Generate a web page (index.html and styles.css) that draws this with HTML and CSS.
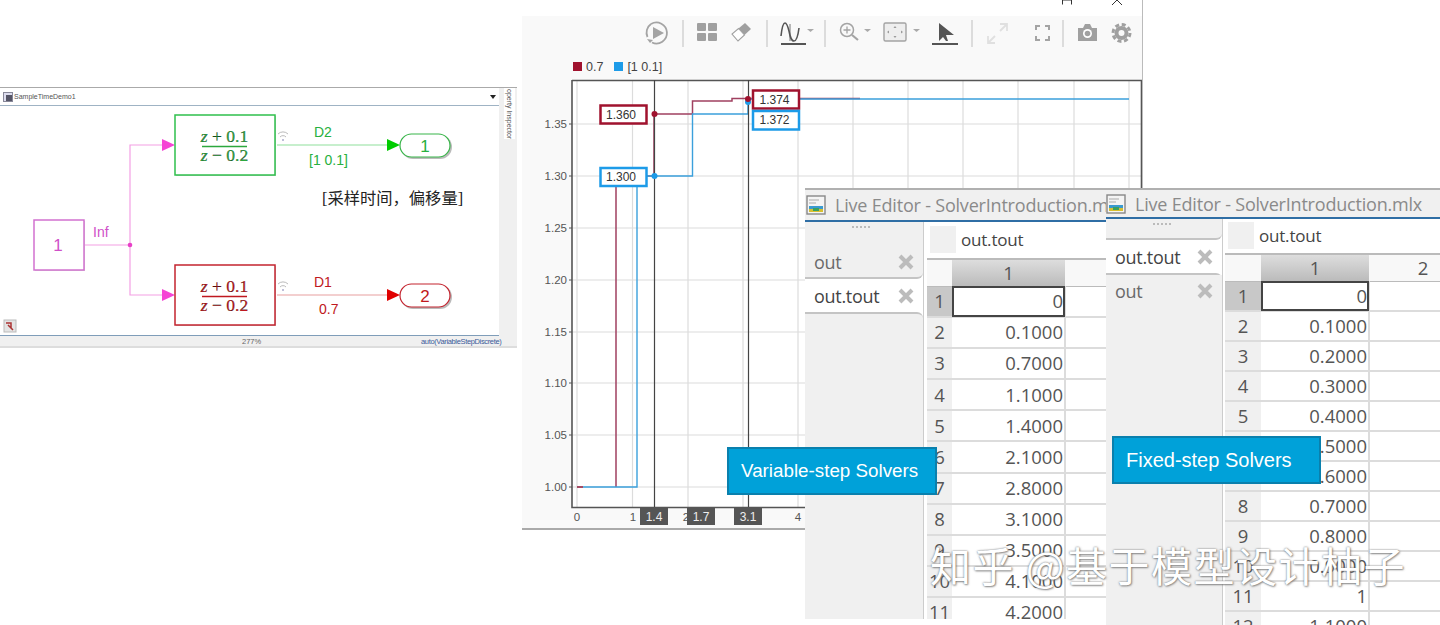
FILE: index.html
```html
<!DOCTYPE html>
<html lang="en">
<head>
  <meta charset="UTF-8" />
  <title>Solver comparison</title>
  <link rel="stylesheet" href="styles.css">
</head>
<body>
  <!-- Simulink model -->
  <div class="window model">
    <div class="model-main">
      <div class="model-title">
        <svg class="model-icon" width="10" height="10" viewBox="0 0 10 10"><rect x="0.5" y="0.5" width="9" height="9" fill="#dde" stroke="#889"/><rect x="3" y="3" width="6" height="6" fill="#556"/></svg>
        <span>SampleTimeDemo1</span>
        <i class="caret"></i>
      </div>
      <svg class="model-canvas" width="499" height="229" viewBox="0 106 499 229">
        <defs>
          <g id="wifi" fill="none" stroke="#bbb" stroke-width="1">
            <path d="M-5 -4a7 7 0 0 1 10 0"/>
            <path d="M-3 -1a4 4 0 0 1 6 0"/>
            <circle cx="0" cy="2" r="1" fill="#aac" stroke="none"/>
          </g>
        </defs>
        <rect x="4" y="320" width="12" height="12" fill="#e4e4e4" stroke="#bbb"/>
        <path d="M6 323h5v5M8 325l5 5" fill="none" stroke="#a33" stroke-width="1.5"/>

        <rect x="35" y="221" width="50" height="50" fill="#bbb" opacity="0.6"/>
        <rect x="34" y="220" width="50" height="50" fill="#fff" stroke="#d272cf" stroke-width="1.5"/>
        <text class="port" x="58" y="251" fill="#d050c8">1</text>
        <text class="sig" x="93" y="237" fill="#d050c8">Inf</text>
        <path d="M85 245H130M163 145H130V295H163" fill="none" stroke="#f3a0e4" stroke-width="1.2"/>
        <circle cx="130" cy="245" r="2.3" fill="#e840c8"/>
        <path d="M162 139l13 6l-13 6zM162 289l13 6l-13 6z" fill="#f545d5"/>

        <rect x="176" y="116" width="100" height="60" fill="#ccc"/>
        <rect x="175" y="115" width="100" height="60" fill="#fff" stroke="#2fc04c" stroke-width="1.5"/>
        <text class="frac" x="224.500" y="142" fill="#2ca83e"><tspan class="var">z</tspan> + 0.1</text>
        <path d="M202 146.500H247" stroke="#2ca83e" stroke-width="1.5"/>
        <text class="frac" x="224.500" y="161" fill="#2ca83e"><tspan class="var">z</tspan> − 0.2</text>
        <use href="#wifi" x="283" y="138"/>
        <path d="M277 145H388" stroke="#8fe09c" stroke-width="1.2"/>
        <path d="M387 139l13 6l-13 6z" fill="#0c0"/>
        <text class="sig" x="314" y="137" fill="#28b040">D2</text>
        <text class="sig" x="309" y="165" fill="#28b040">[1 0.1]</text>
        <rect x="401" y="135" width="51" height="24" rx="12" fill="#bbb"/>
        <rect x="400" y="134" width="50" height="23" rx="11.500" fill="#fff" stroke="#39b54a" stroke-width="1.2"/>
        <text class="port" x="425" y="152" fill="#28b040">1</text>

        <rect x="176" y="266" width="100" height="60" fill="#ccc"/>
        <rect x="175" y="265" width="100" height="60" fill="#fff" stroke="#c4242f" stroke-width="1.5"/>
        <text class="frac" x="224.500" y="292" fill="#c01820"><tspan class="var">z</tspan> + 0.1</text>
        <path d="M202 296.500H247" stroke="#c01820" stroke-width="1.5"/>
        <text class="frac" x="224.500" y="311" fill="#c01820"><tspan class="var">z</tspan> − 0.2</text>
        <use href="#wifi" x="283" y="288"/>
        <path d="M277 295H388" stroke="#e8a0a0" stroke-width="1.2"/>
        <path d="M387 289l13 6l-13 6z" fill="#e00000"/>
        <text class="sig" x="314" y="287" fill="#c01820">D1</text>
        <text class="sig" x="319" y="314" fill="#c01820">0.7</text>
        <rect x="401" y="285" width="51" height="24" rx="12" fill="#bbb"/>
        <rect x="400" y="284" width="50" height="23" rx="11.500" fill="#fff" stroke="#c4242f" stroke-width="1.2"/>
        <text class="port" x="425" y="302" fill="#c01820">2</text>

        <text class="note" x="322" y="204">[采样时间，偏移量]</text>
      </svg>
      <div class="model-status">
        <span class="zoom-level">277%</span>
        <span class="solver">auto(VariableStepDiscrete)</span>
      </div>
    </div>
    <div class="side-tab"><span>operty Inspector</span></div>
  </div>

  <!-- Scope -->
  <div class="window scope">
    <div class="scope-top">
      <svg width="620" height="16" viewBox="522 0 620 16">
        <path d="M1062.500 4.500V0H1071.500V4.500M1112 5L1117 0L1122 5" fill="none" stroke="#333"/>
      </svg>
    </div>
    <svg class="toolbar" width="620" height="39" viewBox="522 16 620 39">
      <g stroke="#c8c8c8" stroke-width="1.2">
        <path d="M683 20V47M767 20V47M825 20V47M972 20V47M1063 20V47"/>
      </g>
      <!-- play -->
      <path d="M651 24A10.500 10.500 0 1 1 652 42.500" fill="none" stroke="#a4a4a4" stroke-width="1.8"/>
      <path d="M647.500 37A10.500 10.500 0 0 1 651 24" fill="none" stroke="#a4a4a4" stroke-width="1.8"/>
      <path d="M647 39l3 4l3 -3z" fill="#a4a4a4"/>
      <path d="M653 27L664 33L653 39z" fill="#a4a4a4"/>
      <!-- layout -->
      <g fill="#a0a0a0">
        <rect x="697" y="23" width="9" height="8" rx="1"/><rect x="708" y="23" width="9" height="8" rx="1"/>
        <rect x="697" y="33" width="9" height="8" rx="1"/><rect x="708" y="33" width="9" height="8" rx="1"/>
      </g>
      <!-- eraser -->
      <path d="M745 23L751 29L744.500 35L738.500 28.500z" fill="#a0a0a0"/>
      <path d="M738.500 28.500L744.500 35L738 41L732 34z" fill="#fff" stroke="#a0a0a0" stroke-width="1.1"/>
      <!-- signal -->
      <path d="M781 36C782 27 783 23 785 23C787 23 788 27 789 31C790 36 791 41 794 41C796 41 798 36 799 28" fill="none" stroke="#555" stroke-width="1.6"/>
      <path d="M790 24V41" stroke="#555" stroke-width="0.8"/>
      <path d="M781 44H806" stroke="#555" stroke-width="2"/>
      <path d="M807 29h7l-3.500 3z" fill="#aaa"/>
      <!-- zoom -->
      <circle cx="847" cy="30" r="6.500" fill="none" stroke="#a4a4a4" stroke-width="1.5"/>
      <path d="M843.500 30h7M847 26.500v7" stroke="#a4a4a4" stroke-width="1.3"/>
      <path d="M852 35L858 40" stroke="#a4a4a4" stroke-width="2.2"/>
      <path d="M864 29h7l-3.500 3z" fill="#aaa"/>
      <!-- fit -->
      <rect x="884" y="23" width="22" height="18" rx="1.500" fill="#eee" stroke="#a4a4a4" stroke-width="1.4"/>
      <path d="M895 26l-1.500 2h3zM895 38l-1.500 -2h3zM887 32l2 -1.500v3zM903 32l-2 -1.500v3z" fill="#999"/>
      <path d="M913 29h7l-3.500 3z" fill="#aaa"/>
      <!-- cursor -->
      <path d="M939 23V41L943 37L946 41H948L946 35H954z" fill="#555"/>
      <path d="M932 44H958" stroke="#555" stroke-width="2"/>
      <!-- expand -->
      <path d="M1007 24L1000 31M1000 24h7v7M988 43L995 36M988 36v7h7" fill="none" stroke="#e0e0e0" stroke-width="1.8"/>
      <!-- full screen -->
      <path d="M1036 30v-4h4M1045 26h4v4M1049 36v4h-4M1040 40h-4v-4" fill="none" stroke="#a4a4a4" stroke-width="2"/>
      <!-- camera -->
      <path d="M1078 28h5l2 -4h5l2 4h5v13h-19z" fill="#a0a0a0"/>
      <circle cx="1087.500" cy="33.500" r="4.500" fill="#fff"/>
      <circle cx="1087.500" cy="33.500" r="2.800" fill="#a0a0a0"/>
      <!-- settings -->
      <circle cx="1121.500" cy="33" r="8.500" fill="none" stroke="#a0a0a0" stroke-width="3" stroke-dasharray="4 2.670"/>
      <circle cx="1121.500" cy="33" r="5" fill="none" stroke="#a0a0a0" stroke-width="4"/>
    </svg>
    <div class="legend">
      <i class="swatch dark-red"></i><span>0.7</span>
      <i class="swatch sky"></i><span>[1 0.1]</span>
    </div>
    <svg class="plot" width="620" height="452" viewBox="522 78 620 452">
      <rect x="572" y="80" width="569" height="427" fill="#fff"/>
      <g stroke="#dcdcdc" stroke-width="1.2">
        <path d="M577 80V507M632.500 80V507M688 80V507M743 80V507M798 80V507M853 80V507M908 80V507M963 80V507M1018 80V507M1074 80V507M1129 80V507"/>
        <path d="M572 124H1141M572 176H1141M572 228H1141M572 280H1141M572 332H1141M572 383H1141M572 435H1141M572 487H1141"/>
      </g>
      <path d="M572 80.500H1141.500V507M572 80V507.500H1141" fill="none" stroke="#555" stroke-width="1.6"/>
      <g stroke="#555" stroke-width="1">
        <path d="M569 124h3M569 176h3M569 228h3M569 280h3M569 332h3M569 383h3M569 435h3M569 487h3"/>
      </g>
      <g class="tick">
        <text x="567" y="128">1.35</text>
        <text x="567" y="180">1.30</text>
        <text x="567" y="232">1.25</text>
        <text x="567" y="284">1.20</text>
        <text x="567" y="336">1.15</text>
        <text x="567" y="387">1.10</text>
        <text x="567" y="439">1.05</text>
        <text x="567" y="491">1.00</text>
      </g>
      <g class="tick center">
        <text x="577" y="521">0</text>
        <text x="633" y="521">1</text>
        <text x="686" y="521">2</text>
        <text x="798" y="521">4</text>
      </g>
      <path d="M616 487V176H654V114H692.500V101H732V98.500H860" fill="none" stroke="#a04060" stroke-width="1.5"/>
      <path d="M577 487H637V176H692.500V114H748V99H1129" fill="none" stroke="#3ba0dc" stroke-width="1.4"/>
      <path d="M577 487H583" stroke="#c02030" stroke-width="1.4"/>
      <path d="M654.500 80V507M748.500 80V507" stroke="#444" stroke-width="1.2"/>
      <circle cx="654.500" cy="114" r="3" fill="#a0122e"/>
      <circle cx="654.500" cy="176" r="3" fill="#1d9be8"/>
      <circle cx="748" cy="102" r="3" fill="#1d9be8"/>
      <circle cx="748" cy="99" r="3" fill="#a0122e"/>
      <g class="readout">
        <rect x="600.500" y="105.500" width="46" height="18" stroke="#a0122e"/>
        <text x="621" y="119">1.360</text>
        <rect x="600.500" y="168" width="46" height="18" stroke="#1d9be8"/>
        <text x="621" y="181">1.300</text>
        <rect x="753" y="90.500" width="46" height="18" stroke="#a0122e"/>
        <text x="774.500" y="104">1.374</text>
        <rect x="753" y="111" width="46" height="18.500" stroke="#1d9be8"/>
        <text x="774.500" y="124">1.372</text>
      </g>
      <g class="cursor-tag">
        <rect x="640" y="508" width="28" height="17"/><text x="654" y="521">1.4</text>
        <rect x="687" y="508" width="28" height="17"/><text x="701" y="521">1.7</text>
        <rect x="734" y="508" width="28" height="17"/><text x="748" y="521">3.1</text>
      </g>
    </svg>
  </div>

  <!-- Live editor, variable-step -->
  <div class="window editor editor-var">
    <div class="editor-title">
      <svg class="editor-icon" width="20" height="20" viewBox="0 0 20 20"><rect x="1" y="1" width="18" height="18" fill="#f4f4f4" stroke="#888" stroke-width="1.4"/><path d="M3 5h10M3 8h7" stroke="#aaa"/><rect x="3" y="11" width="14" height="3" fill="#3a9ad0"/><rect x="3" y="14" width="14" height="3" fill="#d8c030"/><rect x="7" y="13" width="6" height="3" fill="#3aa060"/></svg>
      <span>Live Editor - SolverIntroduction.mlx</span>
    </div>
    <div class="editor-body">
      <div class="vars">
        <div class="grip"></div>
        <div class="var-tab">
          <span>out</span>
          <svg class="var-x" width="16" height="16" viewBox="0 0 16 16"><path d="M2 2L14 14M14 2L2 14" stroke="#bcbcbc" stroke-width="4"/></svg>
        </div>
        <div class="var-tab active">
          <span>out.tout</span>
          <svg class="var-x" width="16" height="16" viewBox="0 0 16 16"><path d="M2 2L14 14M14 2L2 14" stroke="#bcbcbc" stroke-width="4"/></svg>
        </div>
        <div class="var-rest"></div>
      </div>
      <div class="sheet">
        <div class="sheet-name"><i></i><span>out.tout</span></div>
        <table>
          <thead><tr><th class="idx"></th><th class="cur">1</th><th>2</th></tr></thead>
          <tbody>
            <tr class="first"><th>1</th><td class="selected">0</td><td></td></tr>
            <tr><th>2</th><td>0.1000</td><td></td></tr>
            <tr><th>3</th><td>0.7000</td><td></td></tr>
            <tr><th>4</th><td>1.1000</td><td></td></tr>
            <tr><th>5</th><td>1.4000</td><td></td></tr>
            <tr><th>6</th><td>2.1000</td><td></td></tr>
            <tr><th>7</th><td>2.8000</td><td></td></tr>
            <tr><th>8</th><td>3.1000</td><td></td></tr>
            <tr><th>9</th><td>3.5000</td><td></td></tr>
            <tr><th>10</th><td>4.1000</td><td></td></tr>
            <tr><th>11</th><td>4.2000</td><td></td></tr>
          </tbody>
        </table>
      </div>
    </div>
  </div>

  <!-- Live editor, fixed-step -->
  <div class="window editor editor-fixed">
    <div class="editor-title">
      <svg class="editor-icon" width="20" height="20" viewBox="0 0 20 20"><rect x="1" y="1" width="18" height="18" fill="#f4f4f4" stroke="#888" stroke-width="1.4"/><path d="M3 5h10M3 8h7" stroke="#aaa"/><rect x="3" y="11" width="14" height="3" fill="#3a9ad0"/><rect x="3" y="14" width="14" height="3" fill="#d8c030"/><rect x="7" y="13" width="6" height="3" fill="#3aa060"/></svg>
      <span>Live Editor - SolverIntroduction.mlx</span>
    </div>
    <div class="editor-body">
      <div class="vars">
        <div class="grip"></div>
        <div class="var-top"></div>
        <div class="var-tab active">
          <span>out.tout</span>
          <svg class="var-x" width="16" height="16" viewBox="0 0 16 16"><path d="M2 2L14 14M14 2L2 14" stroke="#bcbcbc" stroke-width="4"/></svg>
        </div>
        <div class="var-rest">
          <div class="var-tab">
            <span>out</span>
            <svg class="var-x" width="16" height="16" viewBox="0 0 16 16"><path d="M2 2L14 14M14 2L2 14" stroke="#bcbcbc" stroke-width="4"/></svg>
          </div>
        </div>
      </div>
      <div class="sheet">
        <div class="sheet-name"><i></i><span>out.tout</span></div>
        <table>
          <thead><tr><th class="idx"></th><th class="cur">1</th><th>2</th></tr></thead>
          <tbody>
            <tr class="first"><th>1</th><td class="selected">0</td><td></td></tr>
            <tr><th>2</th><td>0.1000</td><td></td></tr>
            <tr><th>3</th><td>0.2000</td><td></td></tr>
            <tr><th>4</th><td>0.3000</td><td></td></tr>
            <tr><th>5</th><td>0.4000</td><td></td></tr>
            <tr><th>6</th><td>0.5000</td><td></td></tr>
            <tr><th>7</th><td>0.6000</td><td></td></tr>
            <tr><th>8</th><td>0.7000</td><td></td></tr>
            <tr><th>9</th><td>0.8000</td><td></td></tr>
            <tr><th>10</th><td>0.9000</td><td></td></tr>
            <tr><th>11</th><td>1</td><td></td></tr>
            <tr><th>12</th><td>1.1000</td><td></td></tr>
          </tbody>
        </table>
      </div>
    </div>
  </div>

  <div class="callout callout-var">Variable-step Solvers</div>
  <div class="callout callout-fixed">Fixed-step Solvers</div>

  <div class="watermark">知乎 @基于模型设计柚子</div>
</body>
</html>
```

FILE: styles.css
```css
:root {
  --panel: #f0f0f0;
  --line: #dcdcdc;
  --text-muted: #8a8a8a;
  --text-cell: #555;
  --dark-red: #a0122e;
  --sky: #1d9be8;
  --callout: #00a1d9;
}

* {
  box-sizing: border-box;
}

html, body {
  margin: 0;
  padding: 0;
  width: 1440px;
  height: 625px;
  overflow: hidden;
  background: #fff;
  font-family: "Liberation Sans", Arial, sans-serif;
}

.window {
  position: absolute;
  overflow: hidden;
}

svg {
  display: block;
  flex: none;
}

/* model window */
.model {
  left: 0;
  top: 87px;
  width: 517px;
  height: 261px;
  background: var(--panel);
  display: flex;
  border-top: 1px solid #aaa;
  border-bottom: 2px solid #ddd;
}

.model-main {
  width: 499px;
  display: flex;
  flex-direction: column;
}

.model-title {
  flex: none;
  height: 18px;
  background: #fff;
  border-bottom: 1px solid #9fb3c4;
  display: flex;
  align-items: center;
  gap: 1px;
  padding: 0 3px 0 3px;
  font-size: 7px;
  color: #555;
}

.caret {
  margin-left: auto;
  border: 3px solid transparent;
  border-top: 4px solid #222;
  border-bottom: 0;
}

.model-canvas {
  background: #fff;
}

.model-status {
  flex: 1;
  min-height: 0;
  border-top: 1px solid #7f9db9;
  font-size: 7.500px;
  line-height: 12px;
  color: #666;
  white-space: nowrap;
}

.zoom-level {
  margin-left: 242px;
}

.solver {
  position: absolute;
  left: 421px;
  letter-spacing: -0.35px;
  color: #3a5a9a;
}

.side-tab {
  margin-left: 5px;
  width: 11px;
  height: 51px;
  background: #fff;
  overflow: hidden;
}

.side-tab span {
  display: block;
  width: 60px;
  white-space: nowrap;
  font-size: 7px;
  line-height: 9px;
  color: #555;
  transform: rotate(90deg) translate(1px, -10px);
  transform-origin: 0 0;
}

.port {
  font-size: 17px;
  text-anchor: middle;
}

.sig {
  font-size: 14px;
}

.frac {
  font-family: "Liberation Serif", serif;
  font-size: 17.500px;
  text-anchor: middle;
  stroke: currentColor;
  stroke-width: 0.2px;
}

.var {
  font-style: italic;
}

.note {
  font-family: "Liberation Serif", "Noto Sans CJK SC", serif;
  font-size: 16.300px;
  fill: #222;
}

/* scope window */
.scope {
  left: 522px;
  top: 0;
  width: 621px;
  height: 530px;
  background: #f9f9f9;
  border-right: 1px solid #bbb;
  border-bottom: 2px solid #aaa;
}

.scope-top {
  height: 16px;
  background: #fff;
}

.toolbar {
  background: #f9f9f9;
}

.legend {
  height: 23px;
  display: flex;
  align-items: center;
  padding: 0 0 0 51px;
  font-size: 12.500px;
  color: #444;
}

.legend span {
  margin-right: 11px;
}

.swatch {
  width: 9px;
  height: 9px;
  margin-right: 4px;
}

.dark-red {
  background: var(--dark-red);
}

.sky {
  background: var(--sky);
}

.tick text {
  font-size: 11.500px;
  fill: #555;
  text-anchor: end;
}

.tick.center text {
  text-anchor: middle;
}

.readout rect {
  fill: #fff;
  stroke-width: 2.500;
}

.readout text {
  font-size: 12px;
  fill: #333;
  text-anchor: middle;
}

.cursor-tag rect {
  fill: #555;
}

.cursor-tag text {
  font-size: 12px;
  fill: #eee;
  text-anchor: middle;
}

/* live editor windows */
.editor {
  top: 188px;
  height: 431px;
  background: #fff;
  display: flex;
  flex-direction: column;
  font-family: "Open Sans", sans-serif;
}

.editor-var {
  left: 805px;
  width: 301px;
}

.editor-fixed {
  left: 1106px;
  width: 334px;
  height: 437px;
}

.editor-title {
  flex: none;
  background: var(--panel);
  border-top: 2px solid #b0b0b0;
  border-bottom: 2px solid #2f6ea5;
  display: flex;
  align-items: center;
  white-space: nowrap;
  font-size: 18px;
  letter-spacing: -0.2px;
  color: var(--text-muted);
  gap: 9px;
}

.editor-var .editor-title {
  height: 34px;
  padding-left: 1px;
}

.editor-fixed .editor-title {
  height: 31px;
}

.editor-body {
  position: relative;
  flex: 1;
  display: flex;
  min-height: 0;
}

.vars {
  flex: none;
  display: flex;
  flex-direction: column;
  background: #fff;
  border-right: 1px solid #ccc;
}

.editor-var .vars {
  width: 119px;
}

.editor-fixed .vars {
  width: 117px;
}

.grip {
  position: absolute;
  top: 4px;
  left: 47px;
  width: 18px;
  border-top: 2px dotted #bbb;
}

.var-top {
  height: 21px;
  background: var(--panel);
  border-bottom: 2px solid #c4c4c4;
  border-bottom-right-radius: 6px;
}

.var-tab {
  height: 33px;
  display: flex;
  align-items: center;
  justify-content: space-between;
  padding: 0 9px;
  font-size: 18px;
  letter-spacing: -0.3px;
  color: #6a6a6a;
  background: var(--panel);
}

.var-tab.active {
  color: #444;
  background: #fff;
}

.editor-var .var-tab:not(.active) {
  height: 57px;
  padding-top: 24px;
  border-bottom: 2px solid #c4c4c4;
  border-bottom-right-radius: 6px;
}

.var-rest {
  flex: 1;
  background: var(--panel);
  border-top: 2px solid #c4c4c4;
  border-top-right-radius: 6px;
}

.var-rest .var-tab {
  height: 31px;
}

.sheet {
  flex: 1;
  min-width: 0;
  background: #fff;
  padding: 4px 0 0 3px;
}

.editor-fixed .sheet {
  padding: 3px 0 0 2px;
}

.sheet-name {
  display: flex;
  align-items: center;
  height: 27px;
  gap: 5px;
  padding-left: 3px;
  font-size: 17px;
  letter-spacing: -0.2px;
  color: #444;
}

.sheet-name i {
  width: 26px;
  height: 27px;
  background: #f0f0f0;
}

table {
  margin-top: 5px;
  border-collapse: collapse;
  table-layout: fixed;
  border-top: 2px solid #bbb;
  font-size: 18.500px;
  color: var(--text-cell);
}

.editor-fixed table {
  margin-top: 4px;
  width: 252px;
}

.editor-var table {
  width: 250px;
}

.idx {
  background: #f8f8f8;
}

.editor-var table .idx {
  width: 25px;
}

.editor-fixed table .idx {
  width: 36px;
}

.editor-var table thead th:nth-child(2) {
  width: 113px;
}

.editor-fixed table thead th:nth-child(2) {
  width: 108px;
}

thead th {
  height: 27px;
  padding: 0;
  font-weight: normal;
  color: #555;
  background: #f8f8f8;
  border-bottom: 1px solid #bbb;
}

thead th.cur {
  background: linear-gradient(#ddd, #bbb);
}

tbody th {
  padding: 0;
  font-weight: normal;
  background: #f0f0f0;
  text-align: center;
  line-height: 1;
}

tbody td {
  padding: 0 1px 0 0;
  text-align: right;
  border-bottom: 2px solid var(--line);
  line-height: 1;
}

tbody td:nth-child(2) {
  border-right: 2px solid var(--line);
}

tbody tr th {
  border-bottom: 2px solid var(--line);
}

.editor-var tbody tr {
  height: 31.100px;
}

.editor-fixed tbody tr {
  height: 30px;
}

tr.first th {
  background: #c8c8c8;
}

td.selected {
  outline: 2px solid #444;
  outline-offset: -2px;
  border-right: 0;
}

/* callouts */
.callout {
  position: absolute;
  display: flex;
  align-items: center;
  height: 48px;
  background: var(--callout);
  border: 2px solid #0a80ad;
  color: #fff;
  white-space: nowrap;
}

.callout-var {
  left: 727px;
  top: 447px;
  width: 210px;
  padding-left: 12px;
  font-size: 18.800px;
}

.callout-fixed {
  left: 1112px;
  top: 436px;
  width: 209px;
  padding-left: 12px;
  font-size: 20px;
}

.watermark {
  position: absolute;
  left: 930px;
  top: 534px;
  font-family: "Noto Sans CJK SC", sans-serif;
  font-size: 41px;
  letter-spacing: 1.500px;
  line-height: 60px;
  white-space: nowrap;
  color: #fff;
  text-shadow: 0 0 2px rgba(90, 90, 90, 0.9), 1px 1px 2px rgba(120, 120, 120, 0.7);
}
```
